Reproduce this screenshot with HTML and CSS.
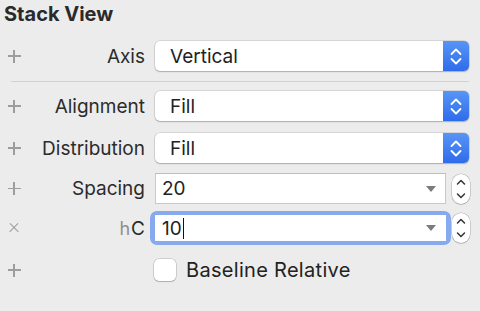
FILE: index.html
```html
<!DOCTYPE html>
<html>
<head>
<meta charset="utf-8">
<link rel="stylesheet" href="styles.css">
</head>
<body>
<div class="panel">
  <div class="title">Stack View</div>

  <div class="row r-axis">
    <span class="icon plus"></span>
    <span class="label">Axis</span>
    <div class="popup">
      <span class="value">Vertical</span>
      <span class="arrows"><svg width="26" height="30" viewBox="0 0 26 30"><path d="M8.5 13 L13 8.5 L17.5 13 M8.5 18 L13 22.5 L17.5 18" fill="none" stroke="#fff" stroke-width="1.8" stroke-linecap="round" stroke-linejoin="round"/></svg></span>
    </div>
  </div>

  <div class="sep"></div>

  <div class="row r-align">
    <span class="icon plus"></span>
    <span class="label">Alignment</span>
    <div class="popup">
      <span class="value">Fill</span>
      <span class="arrows"><svg width="26" height="30" viewBox="0 0 26 30"><path d="M8.5 13 L13 8.5 L17.5 13 M8.5 18 L13 22.5 L17.5 18" fill="none" stroke="#fff" stroke-width="1.8" stroke-linecap="round" stroke-linejoin="round"/></svg></span>
    </div>
  </div>

  <div class="row r-dist">
    <span class="icon plus"></span>
    <span class="label">Distribution</span>
    <div class="popup">
      <span class="value">Fill</span>
      <span class="arrows"><svg width="26" height="30" viewBox="0 0 26 30"><path d="M8.5 13 L13 8.5 L17.5 13 M8.5 18 L13 22.5 L17.5 18" fill="none" stroke="#fff" stroke-width="1.8" stroke-linecap="round" stroke-linejoin="round"/></svg></span>
    </div>
  </div>

  <div class="row r-spacing">
    <span class="icon plus"></span>
    <span class="label">Spacing</span>
    <div class="combo-wrap">
      <div class="combo">
        <span class="num">20</span>
        <span class="tri"></span>
      </div>
      <div class="stepper"><svg width="18" height="30" viewBox="0 0 18 30"><path d="M5.5 10 L9 6.5 L12.5 10 M5.5 20 L9 23.5 L12.5 20" fill="none" stroke="#333" stroke-width="1.5" stroke-linecap="round" stroke-linejoin="round"/></svg></div>
    </div>
  </div>

  <div class="row r-hc">
    <span class="icon cross"></span>
    <span class="label"><span class="h">h</span>C</span>
    <div class="combo-wrap">
      <div class="ring">
        <div class="combo">
          <span class="num">10<span class="caret"></span></span>
          <span class="tri"></span>
        </div>
      </div>
      <div class="stepper"><svg width="18" height="30" viewBox="0 0 18 30"><path d="M5.5 10 L9 6.5 L12.5 10 M5.5 20 L9 23.5 L12.5 20" fill="none" stroke="#333" stroke-width="1.5" stroke-linecap="round" stroke-linejoin="round"/></svg></div>
    </div>
  </div>

  <div class="row r-base">
    <span class="icon plus"></span>
    <span class="label"></span>
    <label class="check"><span class="box"></span><span class="ctext">Baseline Relative</span></label>
  </div>
</div>
</body>
</html>
```

FILE: styles.css
```css
html, body {
  margin: 0;
  padding: 0;
  background: #ececec;
}
body {
  width: 480px;
  height: 311px;
  overflow: hidden;
  font-family: "Inter", "Liberation Sans", sans-serif;
  color: #262626;
}
.panel {
  padding-top: 3px;
}
.title {
  font-weight: 700;
  font-size: 20px;
  line-height: 22px;
  padding-left: 4px;
  height: 38px;
  color: #2a2a2a;
}
.row {
  display: grid;
  grid-template-columns: 18px 117px 314px;
  column-gap: 10px;
  align-items: center;
  height: 30px;
}
.r-align { margin-top: 9px; }
.r-dist { margin-top: 12px; }
.r-spacing { margin-top: 10px; height: 31px; }
.r-hc { margin-top: 7px; height: 34px; }
.r-base { margin-top: 10px; height: 30px; }

.icon {
  position: relative;
  width: 18px;
  height: 30px;
}
.plus::before, .plus::after {
  content: "";
  position: absolute;
  background: #9d9d9d;
  left: 14px;
  top: 15px;
}
.plus::before { width: 13px; height: 1.5px; margin-left: -6.5px; margin-top: -0.75px; }
.plus::after { width: 1.5px; height: 13px; margin-left: -0.75px; margin-top: -6.5px; }
.cross::before, .cross::after {
  content: "";
  position: absolute;
  background: #9d9d9d;
  left: 14px;
  top: 15px;
  width: 12px;
  height: 1.4px;
  margin-left: -6px;
  margin-top: -0.7px;
}
.cross::before { transform: rotate(45deg); }
.cross::after { transform: rotate(-45deg); }

.label {
  text-align: right;
  font-size: 19px;
  white-space: nowrap;
  color: #2b2b2b;
}
.label .h {
  color: #8f8f8f;
  font-size: 18px;
  margin-right: 1px;
}

.sep {
  height: 1px;
  background: #d2d2d2;
  margin: 10px 11px 0 11px;
}

.popup {
  display: flex;
  align-items: center;
  height: 30px;
  width: 314px;
  background: #fff;
  border-radius: 5px;
  box-shadow: 0 0 0 0.5px rgba(0,0,0,0.18), 0 1px 1.5px rgba(0,0,0,0.2);
  overflow: hidden;
}
.popup .value {
  flex: 1;
  padding-left: 15px;
  font-size: 19px;
  color: #222;
}
.popup .arrows {
  width: 26px;
  height: 30px;
  background: linear-gradient(#5895f6, #2e6ceb);
  display: flex;
}

.combo-wrap {
  display: flex;
  align-items: center;
  width: 320px;
}
.combo {
  display: flex;
  align-items: center;
  width: 291px;
  height: 31px;
  box-sizing: border-box;
  background: #fff;
  border: 1px solid #c9c9c9;
  border-top-color: #bdbdbd;
}
.combo .num {
  flex: 1;
  padding-left: 6px;
  font-size: 19px;
  color: #222;
  display: flex;
  align-items: center;
}
.tri {
  width: 0;
  height: 0;
  border-left: 5px solid transparent;
  border-right: 5px solid transparent;
  border-top: 6.5px solid #7b7b7b;
  margin-right: 9px;
}
.stepper {
  margin-left: 6px;
  width: 18px;
  height: 30px;
  box-sizing: border-box;
  border-radius: 9px;
  background: #fff;
  box-shadow: 0 0 0 0.5px rgba(0,0,0,0.25), 0 1px 1px rgba(0,0,0,0.12);
  display: flex;
}
.r-hc .combo-wrap {
  margin-left: -5px;
}
.ring {
  padding: 4px 5px;
  border-radius: 7px;
  background: #87aaee;
}
.ring .combo {
  height: 26px;
  border: none;
}
.ring .combo .num {
  padding-left: 7px;
}
.ring .tri {
  margin-right: 10px;
}
.caret {
  display: inline-block;
  width: 1.5px;
  height: 21px;
  background: #111;
  margin-left: 1px;
}
.r-hc .stepper {
  margin-left: 1px;
}

.check {
  display: flex;
  align-items: center;
  grid-column: 3;
  margin-left: -1px;
}
.box {
  width: 22px;
  height: 22px;
  box-sizing: border-box;
  background: #fff;
  border-radius: 5px;
  box-shadow: 0 0 0 0.5px rgba(0,0,0,0.25), 0 1px 1px rgba(0,0,0,0.15);
}
.ctext {
  margin-left: 10px;
  font-size: 20px;
  letter-spacing: 0.3px;
  color: #222;
}
```
